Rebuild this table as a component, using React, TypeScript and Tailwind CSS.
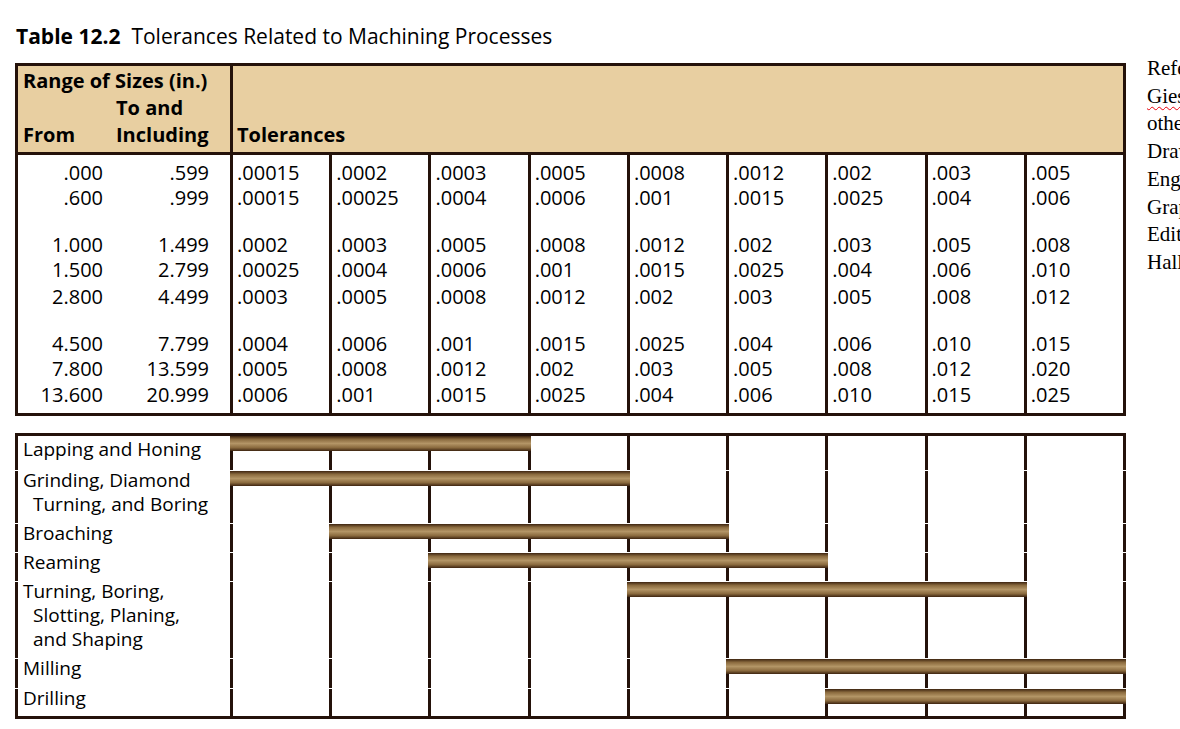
const sizes = [
  { from: ".000", to: ".599" },
  { from: ".600", to: ".999" },
  { from: "1.000", to: "1.499" },
  { from: "1.500", to: "2.799" },
  { from: "2.800", to: "4.499" },
  { from: "4.500", to: "7.799" },
  { from: "7.800", to: "13.599" },
  { from: "13.600", to: "20.999" },
];

const tolerances = [
  [".00015", ".00015", ".0002", ".00025", ".0003", ".0004", ".0005", ".0006"],
  [".0002", ".00025", ".0003", ".0004", ".0005", ".0006", ".0008", ".001"],
  [".0003", ".0004", ".0005", ".0006", ".0008", ".001", ".0012", ".0015"],
  [".0005", ".0006", ".0008", ".001", ".0012", ".0015", ".002", ".0025"],
  [".0008", ".001", ".0012", ".0015", ".002", ".0025", ".003", ".004"],
  [".0012", ".0015", ".002", ".0025", ".003", ".004", ".005", ".006"],
  [".002", ".0025", ".003", ".004", ".005", ".006", ".008", ".010"],
  [".003", ".004", ".005", ".006", ".008", ".010", ".012", ".015"],
  [".005", ".006", ".008", ".010", ".012", ".015", ".020", ".025"],
];

// vertical rhythm of the 8 size rows (three groups)
const rowClass = [
  "h-[25px]",
  "h-[25px] mb-[22px]",
  "h-[25px]",
  "h-[27px]",
  "h-[25px] mb-[22px]",
  "h-[25px]",
  "h-[26px]",
  "h-[25px]",
];

const colStart = [
  "col-start-2",
  "col-start-3",
  "col-start-4",
  "col-start-5",
  "col-start-6",
  "col-start-7",
  "col-start-8",
  "col-start-9",
  "col-start-10",
];

const procesos = [
  { lineas: ["Lapping and Honing"], alto: "h-[34px]", pad: "pt-[1px]", barra: "col-start-2 col-end-5" },
  { lineas: ["Grinding, Diamond", "Turning, and Boring"], alto: "h-[52px]", pad: "-mt-[3px]", barra: "col-start-2 col-end-6" },
  { lineas: ["Broaching"], alto: "h-[28px]", pad: "-mt-[3px]", barra: "col-start-3 col-end-7" },
  { lineas: ["Reaming"], alto: "h-[28px]", pad: "-mt-[3px]", barra: "col-start-4 col-end-8" },
  { lineas: ["Turning, Boring,", "Slotting, Planing,", "and Shaping"], alto: "h-[76px]", pad: "-mt-[3px]", barra: "col-start-6 col-end-10" },
  { lineas: ["Milling"], alto: "h-[29px]", pad: "-mt-[3px]", barra: "col-start-7 col-end-11" },
  { lineas: ["Drilling"], alto: "h-[27px]", pad: "-mt-[3px]", barra: "col-start-8 col-end-11" },
];

const nota = ["Reference:", "Giesecke and", "others, Technical", "Drawing and", "Engineering", "Graphics, 15th", "Edition, Prentice", "Hall"];

export default function App() {
  return (
    <div className="flex h-[729px] w-[1180px] overflow-hidden bg-white font-['Open_Sans',sans-serif] text-black">
      <div className="w-[1126px] shrink-0 pl-[15px] pt-[22px]">
        <h1 className="ml-[1px] whitespace-nowrap text-[21px] leading-[28px]">
          <span className="font-bold">Table 12.2</span>
          <span className="ml-[11px]">Tolerances Related to Machining Processes</span>
        </h1>

        <div className="mt-[13px] w-[1111px] border-[3px] border-[#24120a]">
          <div className="grid h-[89px] grid-cols-[212px_1fr] border-b-[3px] border-[#24120a] bg-[#e8cfa1] text-[20px] font-bold leading-[27px]">
            <div className="whitespace-nowrap pl-[5px] pt-[1px]">
              <div>Range of Sizes (in.)</div>
              <div className="pl-[93px]">To and</div>
              <div className="flex">
                <span className="w-[93px]">From</span>
                <span>Including</span>
              </div>
            </div>
            <div className="border-l-[3px] border-[#24120a] pl-[4px] pt-[55px]">Tolerances</div>
          </div>

          <div className="grid h-[258px] grid-cols-[212px_repeat(9,minmax(0,1fr))] text-[20px] leading-[25px]">
            <div className="flex pt-[5px]">
              <div className="w-[85px] text-right">
                {sizes.map((s, i) => (
                  <div key={s.from} className={rowClass[i]}>
                    {s.from}
                  </div>
                ))}
              </div>
              <div className="w-[106px] text-right">
                {sizes.map((s, i) => (
                  <div key={s.to} className={rowClass[i]}>
                    {s.to}
                  </div>
                ))}
              </div>
            </div>
            {tolerances.map((col, c) => (
              <div key={c} className="border-l-[3px] border-[#24120a] pl-[4px] pt-[5px]">
                {col.map((v, i) => (
                  <div key={i} className={rowClass[i]}>
                    {v}
                  </div>
                ))}
              </div>
            ))}
          </div>
        </div>

        <div className="mt-[17px] flex w-[1111px] flex-col gap-px border-y-[3px] border-[#24120a]">
          {procesos.map((p) => (
            <div
              key={p.lineas[0]}
              className={`grid grid-cols-[212px_repeat(9,minmax(0,1fr))] border-x-[3px] border-[#24120a] ${p.alto}`}
            >
              <div className={`col-start-1 row-start-1 whitespace-nowrap pl-[5px] text-[19px] leading-[24px] ${p.pad}`}>
                {p.lineas.map((l, i) => (
                  <div key={l} className={i > 0 ? "pl-[10px]" : ""}>
                    {l}
                  </div>
                ))}
              </div>
              {colStart.map((cs) => (
                <div key={cs} className={`row-start-1 ${cs} border-l-[3px] border-[#24120a]`} />
              ))}
              <div
                className={`row-start-1 ${p.barra} -mr-[3px] h-[15px] self-start bg-[linear-gradient(to_bottom,#3d2410_0%,#8a6a3e_22%,#b39566_50%,#8a6a3e_78%,#3d2410_100%)]`}
              />
            </div>
          ))}
        </div>
      </div>

      <div className="ml-[21px] shrink-0 whitespace-nowrap pt-[55px] font-['Liberation_Serif',serif] text-[21px] leading-[27.7px]">
        {nota.map((n) =>
          n === "Giesecke and" ? (
            <div key={n}>
              <span className="underline decoration-red-600 decoration-wavy decoration-1 underline-offset-[3px]">Giesecke</span> and
            </div>
          ) : (
            <div key={n}>{n}</div>
          )
        )}
      </div>
    </div>
  );
}
